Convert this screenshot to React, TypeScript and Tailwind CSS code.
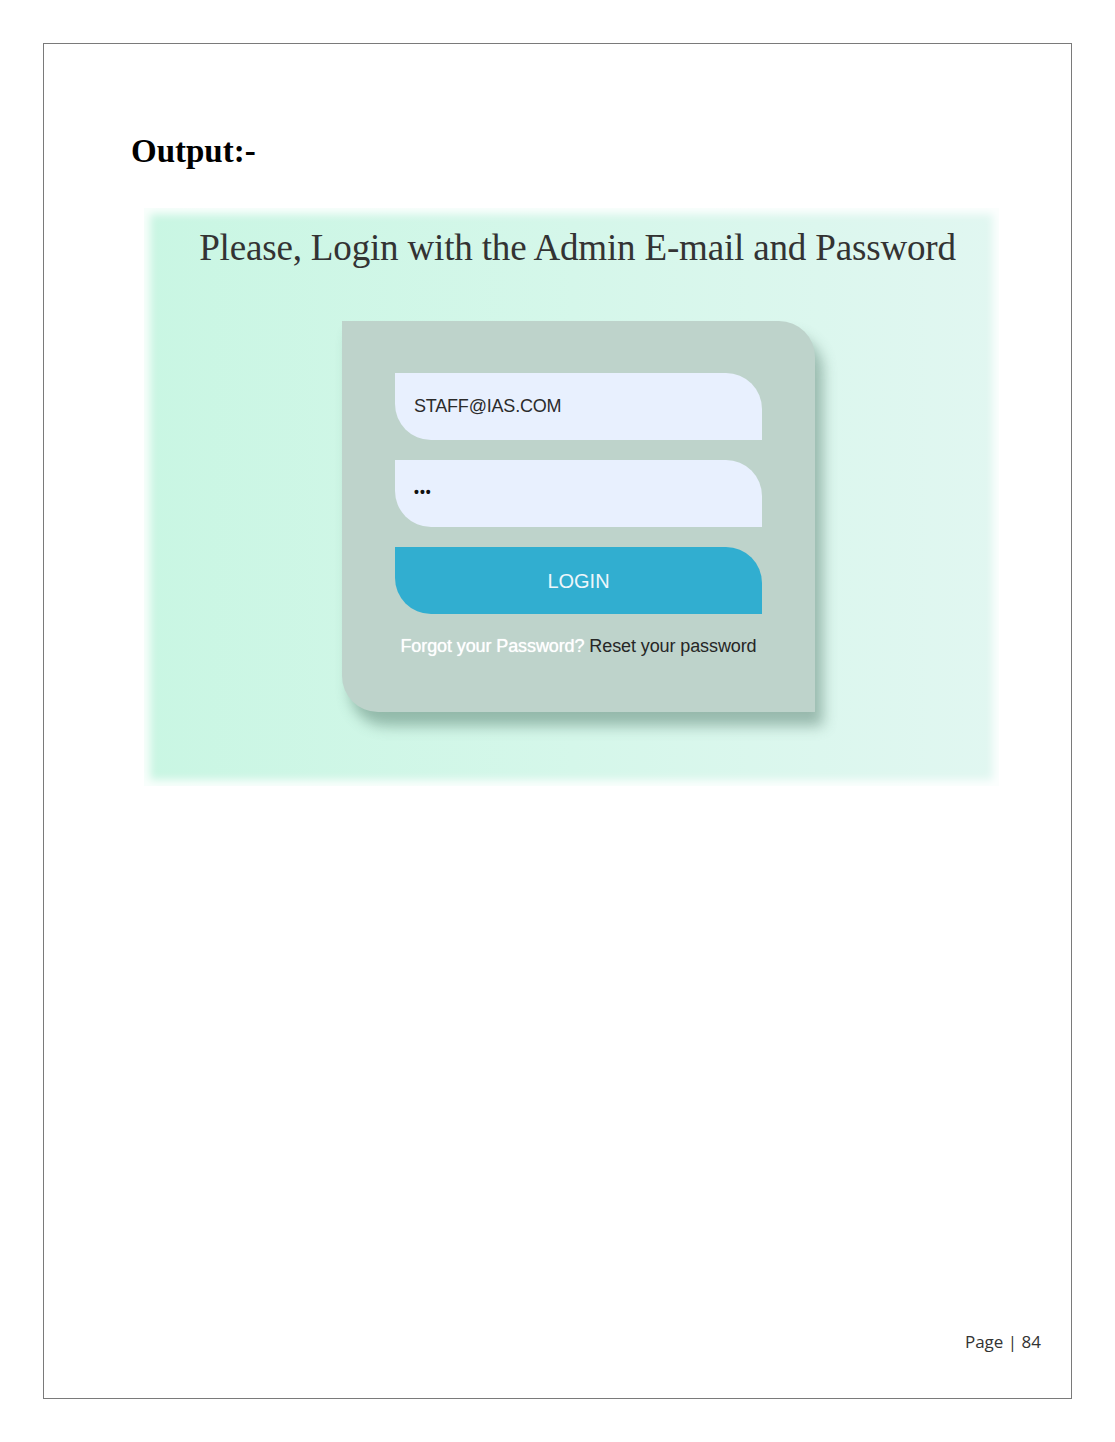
import React from 'react';

const serif = { fontFamily: '"Liberation Serif", "Times New Roman", serif' };
const sans = { fontFamily: '"Liberation Sans", Arial, sans-serif' };

const Field: React.FC<{ children: React.ReactNode; className?: string }> = ({ children, className }) => (
  <div
    className={`h-[67px] w-full flex items-center rounded-tr-[36px] rounded-bl-[36px] ${className ?? 'bg-[#e8f0fe] px-[19px]'}`}
  >
    {children}
  </div>
);

const LoginCard: React.FC = () => (
  <div className="w-[473px] h-[391px] bg-[#bed3cb] rounded-tr-[36px] rounded-bl-[36px] shadow-[8px_14px_14px_rgba(70,110,95,0.45)] pt-[52px] px-[53px]">
    <div className="flex flex-col gap-[20px]" style={sans}>
      <Field>
        <span className="text-[18px] text-[#2b2b2b] tracking-[-0.2px]">STAFF@IAS.COM</span>
      </Field>
      <Field>
        <span className="text-[14px] text-[#111] font-bold tracking-[1px] -mt-[2px]">•••</span>
      </Field>
      <Field className="bg-[#31aed0] justify-center">
        <span className="text-[20px] text-[#eef6fb]">LOGIN</span>
      </Field>
    </div>
    <p className="mt-[19px] text-center text-[18px] tracking-[-0.1px]" style={sans}>
      <span className="text-white [text-shadow:0_0_1px_rgba(255,255,255,0.9)]">Forgot your Password?</span>{' '}
      <span className="text-[#262626]">Reset your password</span>
    </p>
  </div>
);

export default function App() {
  return (
    <div className="w-[1115px] h-[1442px] bg-white pt-[43px] pl-[43px]">
      <div className="w-[1029px] h-[1356px] border border-[#7a7a7a] flex flex-col">
        <h1 className="mt-[87px] ml-[87px] text-[33px] font-bold leading-[40px] text-black" style={serif}>
          Output:-
        </h1>
        <div className="mt-[37px] ml-[100px] w-[855px] h-[578px] pl-[12px] bg-gradient-to-r from-[#c9f6e3] via-[#d5f7ea] to-[#e1f7f1] shadow-[0_0_8px_6px_rgba(255,255,255,0.9)_inset] flex flex-col items-center">
          <h2 className="mt-[17px] text-[37.1px] leading-[46px] text-[#333] tracking-[-0.2px]" style={serif}>
            Please, Login with the Admin E-mail and Password
          </h2>
          <div className="mt-[50px] ml-[2px]">
            <LoginCard />
          </div>
        </div>
        <div className="flex-1" />
        <div className="mb-[44px] mr-[30px] self-end text-[17px] text-[#333]" style={{ fontFamily: '"Open Sans", "Noto Sans", sans-serif' }}>
          Page | 84
        </div>
      </div>
    </div>
  );
}
